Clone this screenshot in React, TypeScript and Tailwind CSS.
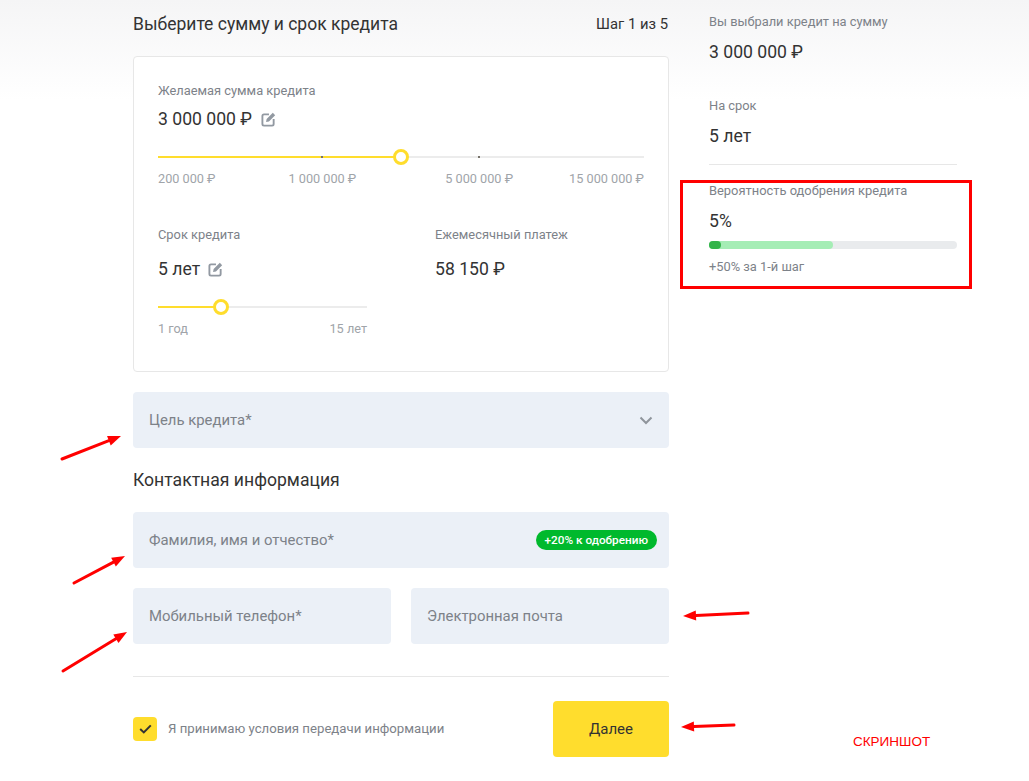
const Edit = () => (
  <svg width="15" height="15" viewBox="0 0 16 16" fill="none" className="text-[#9299a2]">
    <path d="M8.5 2.5H3.2c-.9 0-1.7.8-1.7 1.7v8.6c0 .9.8 1.7 1.7 1.7h8.6c.9 0 1.7-.8 1.7-1.7V7.5" stroke="currentColor" strokeWidth="2" />
    <path d="M12.6.9l2.5 2.5-6.6 6.6-3.1.6.6-3.1 6.6-6.6z" fill="currentColor" />
  </svg>
);

function Slider({ fill, ticks = [] }: { fill: number; ticks?: number[] }) {
  return (
    <div className="relative h-[2px] bg-[#ececec]">
      <div className="h-[2px] bg-[#ffdd2d]" style={{ width: fill }} />
      {ticks.map((t) => (
        <div key={t} className="absolute top-0 w-[2px] h-[2px] bg-[#77736a]" style={{ left: t }} />
      ))}
      <div className="absolute top-[-7px] w-4 h-4 rounded-full bg-white border-[3px] border-[#ffdd2d]" style={{ left: fill - 8 }} />
    </div>
  );
}

function Field({ label, className = "", children }: { label: string; className?: string; children?: React.ReactNode }) {
  return (
    <div className={`h-14 rounded-[4px] bg-[#ebf0f7] flex items-center justify-between pl-4 text-[14.9px] text-[#7d8289] ${className}`}>
      <span>{label}</span>
      {children}
    </div>
  );
}

function Arrow({ x1, y1, x2, y2 }: { x1: number; y1: number; x2: number; y2: number }) {
  const a = Math.atan2(y2 - y1, x2 - x1);
  const bx = x2 - Math.cos(a) * 13;
  const by = y2 - Math.sin(a) * 13;
  const nx = -Math.sin(a) * 5;
  const ny = Math.cos(a) * 5;
  return (
    <g>
      <line x1={x1} y1={y1} x2={bx} y2={by} stroke="#ff0000" strokeWidth="3" strokeLinecap="round" />
      <polygon points={`${x2},${y2} ${bx + nx},${by + ny} ${bx - nx},${by - ny}`} fill="#ff0000" />
    </g>
  );
}

export default function App() {
  return (
    <div className="relative w-full h-[781px] overflow-hidden bg-gradient-to-b from-[#f5f5f6] to-white to-[100px] font-['Roboto',sans-serif] text-[#333]">
      <div className="flex pl-[133px] gap-10">
        <div className="w-[536px] flex flex-col">
          <div className="h-[56px] pt-[12px] flex justify-between">
            <h1 className="text-[17.5px] leading-6 font-normal">Выберите сумму и срок кредита</h1>
            <span className="mr-[1px] text-[14.8px] leading-6">Шаг 1 из 5</span>
          </div>

          <div className="h-[316px] rounded-[4px] border border-[#e7e7e7] bg-white px-6 pt-[26px]">
            <div className="text-[12.85px] leading-4 text-[#7d8289]">Желаемая сумма кредита</div>
            <div className="mt-[8px] flex items-center gap-[9px] text-[17.6px] leading-6">
              3 000 000 ₽ <Edit />
            </div>
            <div className="mt-[25px]">
              <Slider fill={243} ticks={[163, 320]} />
            </div>
            <div className="mt-[13px] flex text-[12.7px] leading-4 text-[#a0a4a9]">
              <span>200 000 ₽</span>
              <span className="ml-[73px]">1 000 000 ₽</span>
              <span className="ml-[89px]">5 000 000 ₽</span>
              <span className="ml-auto">15 000 000 ₽</span>
            </div>

            <div className="mt-[40px] flex">
              <div className="w-[209px]">
                <div className="text-[12.85px] leading-4 text-[#7d8289]">Срок кредита</div>
                <div className="mt-[14px] flex items-center gap-[8px] text-[17.6px] leading-6">
                  5 лет <Edit />
                </div>
                <div className="mt-[25px]">
                  <Slider fill={63} />
                </div>
                <div className="mt-[13px] flex justify-between text-[12.7px] leading-4 text-[#a0a4a9]">
                  <span>1 год</span>
                  <span>15 лет</span>
                </div>
              </div>
              <div className="ml-[68px]">
                <div className="text-[12.85px] leading-4 text-[#7d8289]">Ежемесячный платеж</div>
                <div className="mt-[14px] text-[17.6px] leading-6">58 150 ₽</div>
              </div>
            </div>
          </div>

          <Field label="Цель кредита*" className="mt-5 pr-4">
            <svg width="14" height="9" viewBox="0 0 14 9" fill="none">
              <path d="M1.5 1.5L7 7l5.5-5.5" stroke="#8f959c" strokeWidth="2" />
            </svg>
          </Field>

          <h2 className="mt-[20px] text-[17.6px] leading-6 font-normal">Контактная информация</h2>

          <Field label="Фамилия, имя и отчество*" className="mt-[20px] pr-3">
            <span className="h-5 px-[9px] rounded-full bg-[#00b92d] text-white text-[11.75px] font-medium leading-5">+20% к одобрению</span>
          </Field>

          <div className="mt-5 grid grid-cols-2 gap-5">
            <Field label="Мобильный телефон*" />
            <Field label="Электронная почта" />
          </div>

          <div className="mt-8 border-t border-[#e7e7e7]" />

          <div className="mt-6 flex items-center justify-between">
            <label className="flex items-center gap-[11px] text-[13.2px] text-[#7d8289]">
              <span className="w-6 h-6 rounded-[4px] bg-[#ffdd2d] flex items-center justify-center">
                <svg width="13" height="10" viewBox="0 0 13 10" fill="none">
                  <path d="M1.2 5l3.6 3.4 7-7" stroke="#333" strokeWidth="2" />
                </svg>
              </span>
              Я принимаю условия передачи информации
            </label>
            <button className="w-[116px] h-14 rounded-[4px] bg-[#ffdd2d] text-[15px] text-[#333]">Далее</button>
          </div>
        </div>

        <div className="w-[248px]">
          <div className="mt-[14px] text-[12.85px] leading-4 text-[#7d8289]">Вы выбрали кредит на сумму</div>
          <div className="mt-[10px] text-[17.6px] leading-6">3 000 000 ₽</div>
          <div className="mt-[34px] text-[12.85px] leading-4 text-[#7d8289]">На срок</div>
          <div className="mt-[10px] text-[17.6px] leading-6">5 лет</div>
          <div className="mt-[16px] border-t border-[#e7e7e7]" />
          <div className="mt-[18px] text-[12.9px] leading-4 text-[#7d8289]">Вероятность одобрения кредита</div>
          <div className="mt-[10px] text-[17.6px] leading-6">5%</div>
          <div className="mt-[8px] h-2 rounded-full bg-[#e9ebed]">
            <div className="relative w-[124px] h-2 rounded-full bg-[#a5edb5]">
              <div className="w-3 h-2 rounded-full bg-[#33b44a]" />
            </div>
          </div>
          <div className="mt-[10px] text-[12.85px] leading-4 text-[#7d8289]">+50% за 1-й шаг</div>
        </div>
      </div>

      {/* screenshot annotations */}
      <div className="absolute left-[680px] top-[180px] w-[292px] h-[109px] border-[3px] border-[#ff0000]" />
      <svg className="absolute inset-0" width="1029" height="781">
        <Arrow x1={62} y1={459} x2={121} y2={436} />
        <Arrow x1={74} y1={583} x2={125} y2={556} />
        <Arrow x1={63} y1={671} x2={127} y2={632} />
        <Arrow x1={748} y1={613} x2={683} y2={616} />
        <Arrow x1={734} y1={725} x2={681} y2={727} />
      </svg>
      <div className="absolute left-[853px] top-[734px] text-[13.5px] leading-4 text-[#ff0000] font-['Liberation_Sans',sans-serif]">СКРИНШОТ</div>
    </div>
  );
}
